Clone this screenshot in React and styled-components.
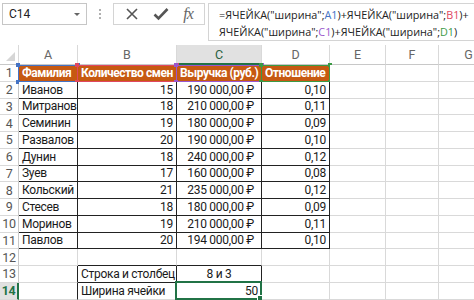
import React from "react";
import styled, { createGlobalStyle } from "styled-components";

const GREEN = "#217346";
const GRID = "#d9d9d9";
const ORANGE = "#c65911";

const GlobalStyle = createGlobalStyle`
  html, body { margin: 0; padding: 0; background: #fff; overflow: hidden; }
  body { font-family: Roboto, "Noto Sans", sans-serif; }
`;

const Page = styled.div`
  width: 474px;
  height: 300px;
  overflow: hidden;
  background: #fff;
`;

const Toolbar = styled.div`
  display: flex;
  align-items: flex-start;
  height: 45px;
  padding: 3px 0 0 2px;
  box-sizing: border-box;
`;

const NameBox = styled.div`
  width: 85px;
  height: 22px;
  box-sizing: border-box;
  border: 1px solid #c6c6c6;
  display: flex;
  align-items: center;
  justify-content: space-between;
  padding: 0 6px 0 6px;
  font-size: 12px;
  color: #222;
`;

const Arrow = styled.span`
  width: 0;
  height: 0;
  border-left: 3px solid transparent;
  border-right: 3px solid transparent;
  border-top: 3px solid #666;
`;

const Dots = styled.div`
  width: 26px;
  height: 22px;
  display: flex;
  flex-direction: column;
  align-items: center;
  justify-content: center;
  gap: 2px;
  span {
    width: 2px;
    height: 2px;
    background: #b0b0b0;
  }
`;

const FxButtons = styled.div`
  width: 92px;
  height: 22px;
  box-sizing: border-box;
  border: 1px solid #d4d4d4;
  display: flex;
  align-items: center;
  justify-content: space-around;
  padding: 0 4px;
  margin-right: 3px;
`;

const FxText = styled.span`
  font-family: "Liberation Serif", "DejaVu Serif", serif;
  font-style: italic;
  font-size: 16px;
  color: #666;
  letter-spacing: -1px;
`;

const FormulaBar = styled.div`
  flex: 1;
  height: 38px;
  box-sizing: border-box;
  border: 1px solid #d4d4d4;
  border-right: none;
  padding: 2px 0 0 10px;
  font-family: "Open Sans", "Noto Sans", sans-serif;
  font-size: 10.8px;
  line-height: 17px;
  color: #222;
  white-space: nowrap;
  overflow: hidden;
`;

const Ref = styled.span`
  color: ${(p) => p.$c};
`;

const Sheet = styled.div`
  display: grid;
  grid-template-columns: 19px 59px 99px 85px 68px 56px 53px 60px;
  grid-template-rows: 20px;
  grid-auto-rows: 16.75px;
`;

const ColHead = styled.div`
  box-sizing: border-box;
  border-right: 1px solid ${GRID};
  border-bottom: ${(p) => (p.$active ? `2px solid ${GREEN}` : `1px solid #c8c8c8`)};
  background: ${(p) => (p.$active ? "#e1e1e1" : "#fff")};
  color: ${(p) => (p.$active ? "#275f3e" : "#666")};
  font-size: 12.5px;
  display: flex;
  align-items: center;
  justify-content: center;
  position: relative;
`;

const Corner = styled.div`
  position: absolute;
  right: 3px;
  bottom: 3px;
  width: 0;
  height: 0;
  border-left: 9px solid transparent;
  border-bottom: 9px solid #d6d6d6;
`;

const RowHead = styled.div`
  box-sizing: border-box;
  border-right: ${(p) => (p.$active ? `2px solid ${GREEN}` : `1px solid #c8c8c8`)};
  border-bottom: 1px solid ${GRID};
  background: ${(p) => (p.$active ? "#e1e1e1" : "#fff")};
  color: ${(p) => (p.$active ? GREEN : "#555")};
  font-weight: ${(p) => (p.$active ? 700 : 400)};
  font-size: 12.5px;
  letter-spacing: -0.3px;
  display: flex;
  align-items: center;
  justify-content: center;
`;

const Cell = styled.div`
  position: relative;
  box-sizing: border-box;
  border-right: 1px solid ${(p) => (p.$rb ? "#222" : GRID)};
  border-bottom: 1px solid ${(p) => (p.$bb ? "#222" : GRID)};
  background: ${(p) => (p.$head ? ORANGE : "#fff")};
  color: ${(p) => (p.$head ? "#fff" : "#1a1a1a")};
  font-weight: ${(p) => (p.$head ? 700 : 400)};
  font-size: 12px;
  letter-spacing: ${(p) => (p.$head ? "-0.45px" : "-0.3px")};
  display: flex;
  align-items: center;
  justify-content: ${(p) => p.$align || "flex-start"};
  padding: 0 3px 0 3px;
  white-space: nowrap;
  overflow: visible;
`;

const RefBox = styled.div`
  position: absolute;
  inset: 0 -1px -1px -1px;
  border: 1px solid ${(p) => p.$c};
  pointer-events: none;
  i {
    position: absolute;
    width: 4px;
    height: 4px;
    background: ${(p) => p.$c};
  }
  i:nth-child(1) { left: -3px; top: -3px; }
  i:nth-child(2) { right: -3px; top: -3px; }
  i:nth-child(3) { left: -3px; bottom: -3px; }
  i:nth-child(4) { right: -3px; bottom: -3px; }
`;

const Selection = styled.div`
  position: absolute;
  inset: -2px -1px -1px -2px;
  border: 2px solid ${GREEN};
  pointer-events: none;
  &::after {
    content: "";
    position: absolute;
    right: -4px;
    bottom: -4px;
    width: 5px;
    height: 5px;
    background: ${GREEN};
    border: 1px solid #fff;
  }
`;

const people = [
  ["Иванов", 15, "190 000,00 ₽", "0,10"],
  ["Митранов", 18, "210 000,00 ₽", "0,11"],
  ["Семинин", 19, "180 000,00 ₽", "0,09"],
  ["Развалов", 20, "190 000,00 ₽", "0,10"],
  ["Дунин", 18, "240 000,00 ₽", "0,12"],
  ["Зуев", 17, "160 000,00 ₽", "0,08"],
  ["Кольский", 21, "235 000,00 ₽", "0,12"],
  ["Стесев", 18, "180 000,00 ₽", "0,09"],
  ["Моринов", 19, "210 000,00 ₽", "0,11"],
  ["Павлов", 20, "194 000,00 ₽", "0,10"],
];

const refColors = ["#4472c4", "#e0475f", "#9a57cd", "#3b9a45"];
const headers = ["Фамилия", "Количество смен", "Выручка (руб.)", "Отношение"];
const letters = ["A", "B", "C", "D", "E", "F", "G"];

function XIcon() {
  return (
    <svg width="14" height="14" viewBox="0 0 14 14">
      <path d="M2 2 L12 12 M12 2 L2 12" stroke="#555" strokeWidth="1.6" fill="none" />
    </svg>
  );
}

function CheckIcon() {
  return (
    <svg width="16" height="14" viewBox="0 0 16 14">
      <path d="M1.5 7.5 L5.5 11.5 L14.5 2" stroke="#555" strokeWidth="2.6" fill="none" />
    </svg>
  );
}

function buildRows() {
  const rows = [];
  rows.push(
    letters.map((_, c) =>
      c < 4 ? { text: headers[c], head: true, bb: true, ref: refColors[c] } : {}
    )
  );
  people.forEach((p) => {
    rows.push(
      letters.map((_, c) => {
        if (c === 0) return { text: p[0], rb: true, bb: true };
        if (c === 1) return { text: p[1], rb: true, bb: true, align: "flex-end" };
        if (c === 2) return { text: p[2], rb: true, bb: true, align: "flex-end", pad: 7 };
        if (c === 3) return { text: p[3], rb: true, bb: true, align: "flex-end" };
        return {};
      })
    );
  });
  rows.push(letters.map((_, c) => ({ bb: c === 1 || c === 2 })));
  rows.push(
    letters.map((_, c) => {
      if (c === 0) return { rb: true };
      if (c === 1) return { text: "Строка и столбец", rb: true, bb: true };
      if (c === 2) return { text: "8 и 3", rb: true, align: "center" };
      return {};
    })
  );
  rows.push(
    letters.map((_, c) => {
      if (c === 0) return { rb: true };
      if (c === 1) return { text: "Ширина ячейки", rb: true };
      if (c === 2) return { text: "50", align: "flex-end", selected: true };
      return {};
    })
  );
  return rows;
}

export default function App() {
  const rows = buildRows();
  return (
    <Page>
      <GlobalStyle />
      <Toolbar>
        <NameBox>
          C14
          <Arrow />
        </NameBox>
        <Dots>
          <span />
          <span />
          <span />
        </Dots>
        <FxButtons>
          <XIcon />
          <CheckIcon />
          <FxText>fx</FxText>
        </FxButtons>
        <FormulaBar>
          <div>
            =ЯЧЕЙКА("ширина";<Ref $c={refColors[0]}>A1</Ref>)+ЯЧЕЙКА("ширина";
            <Ref $c={refColors[1]}>B1</Ref>)+
          </div>
          <div>
            ЯЧЕЙКА("ширина";<Ref $c={refColors[2]}>C1</Ref>)+ЯЧЕЙКА("ширина";
            <Ref $c={refColors[3]}>D1</Ref>)
          </div>
        </FormulaBar>
      </Toolbar>
      <Sheet>
        <ColHead>
          <Corner />
        </ColHead>
        {letters.map((l) => (
          <ColHead key={l} $active={l === "C"}>
            {l}
          </ColHead>
        ))}
        {rows.map((row, r) => (
          <React.Fragment key={r}>
            <RowHead $active={r === 13}>{r + 1}</RowHead>
            {row.map((cell, c) => (
              <Cell
                key={c}
                $rb={cell.rb}
                $bb={cell.bb}
                $head={cell.head}
                $align={cell.align}
                style={cell.pad ? { paddingRight: cell.pad } : undefined}
              >
                {cell.text}
                {cell.ref && (
                  <RefBox $c={cell.ref}>
                    <i />
                    <i />
                    <i />
                    <i />
                  </RefBox>
                )}
                {cell.selected && <Selection />}
              </Cell>
            ))}
          </React.Fragment>
        ))}
      </Sheet>
    </Page>
  );
}
